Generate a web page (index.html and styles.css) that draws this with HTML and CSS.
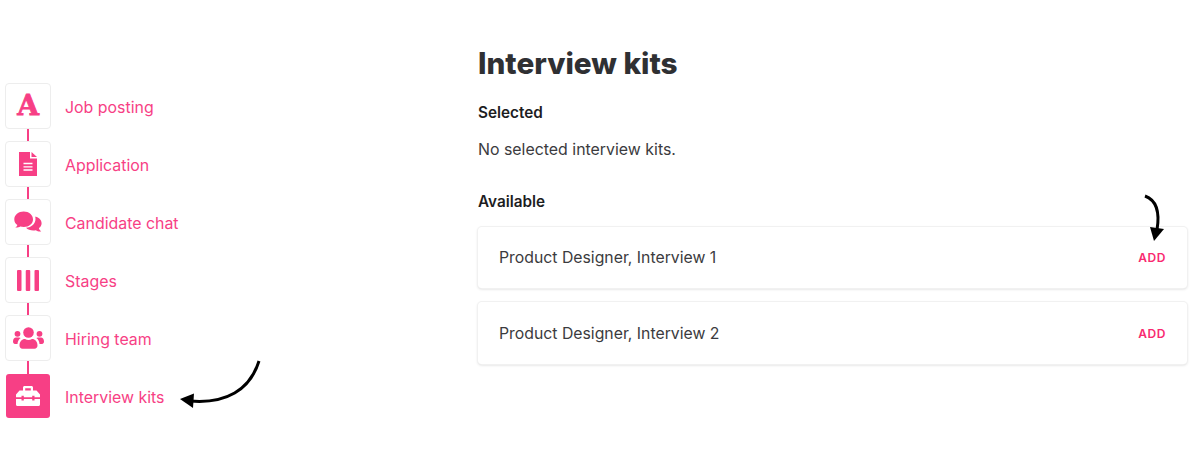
FILE: index.html
```html
<!DOCTYPE html>
<html lang="en">
<head>
  <meta charset="UTF-8">
  <title>Interview kits</title>
  <link rel="stylesheet" href="styles.css">
</head>
<body>
  <div class="page">
    <ul class="steps">
      <li class="step">
        <span class="step-icon"><span class="letter-icon">A</span></span>
        <span class="step-label">Job posting</span>
      </li>
      <li class="step">
        <span class="step-icon">
          <svg width="18" height="24" viewBox="0 0 18 24"><path d="M0 0h11v6.500h7V24H0z" fill="currentColor"/><path d="M12.500 0L18 5h-5.500z" fill="currentColor"/><path d="M4.500 11.500h9M4.500 14.800h9M4.500 18h9" stroke="#fff" stroke-width="1.300"/></svg>
        </span>
        <span class="step-label">Application</span>
      </li>
      <li class="step">
        <span class="step-icon">
          <svg width="28" height="22" viewBox="0 0 28 22"><path d="M19 8.500c0 4.200-4 7.500-9.200 7.500-1.300 0-2.400-.2-3.500-.5-1.200.8-2.900 1.200-5 1.100 1.100-.7 1.800-1.600 2.100-2.700C1.500 13 .3 11 .3 8.500.3 4 4.500.5 9.700.5S19 4 19 8.500z" fill="currentColor"/><path d="M20.600 5.500c4 .6 7 3.300 7 6.700 0 2-1 3.700-2.700 4.900.2 1.300.9 2.400 2.300 3.300-2.200.2-4.100-.3-5.400-1.200-.8.200-1.700.3-2.500.3-3 0-5.600-1-7.300-2.800 5.600-.3 9.500-3.900 9.500-8.700 0-.9-.1-1.700-.4-2.500z" fill="currentColor"/></svg>
        </span>
        <span class="step-label">Candidate chat</span>
      </li>
      <li class="step">
        <span class="step-icon">
          <svg width="22" height="21" viewBox="0 0 22 21"><rect x="0" width="4.500" height="21" rx="1" fill="currentColor"/><rect x="8.750" width="4.500" height="21" rx="1" fill="currentColor"/><rect x="17.500" width="4.500" height="21" rx="1" fill="currentColor"/></svg>
        </span>
        <span class="step-label">Stages</span>
      </li>
      <li class="step">
        <span class="step-icon">
          <svg width="31" height="22" viewBox="0 0 31 22"><circle cx="15.500" cy="5.500" r="5.300" fill="currentColor"/><path d="M6.500 18.500c0-4 2.500-6.500 5.500-6.500 1 .6 2.200 1 3.500 1s2.500-.4 3.500-1c3 0 5.500 2.500 5.500 6.500 0 2-1.200 3.200-3 3.200H9.500c-1.800 0-3-1.200-3-3.200z" fill="currentColor"/><circle cx="4.500" cy="6.800" r="2.900" fill="currentColor"/><circle cx="26.500" cy="6.800" r="2.900" fill="currentColor"/><path d="M0 14.500c0-2.600 1.500-4 3-4h3c.6 0 1.200.2 1.700.6-1.900 1.200-3 3.200-3.200 5.900H2c-1.200 0-2-1-2-2.500zM31 14.500c0-2.600-1.500-4-3-4h-3c-.6 0-1.200.2-1.700.6 1.900 1.200 3 3.200 3.200 5.900H29c1.200 0 2-1 2-2.500z" fill="currentColor"/></svg>
        </span>
        <span class="step-label">Hiring team</span>
      </li>
      <li class="step step-active">
        <span class="step-icon">
          <svg width="24" height="20" viewBox="0 0 24 20"><path d="M7 5V1.500C7 .7 7.700 0 8.500 0h7c.8 0 1.500.7 1.500 1.500V5h-2.200V2.200H9.200V5z" fill="currentColor"/><path d="M3.500 4.500h17L24 8.500v2.700h-5.500V9.700h-2.300v1.500H7.800V9.700H5.500v1.500H0V8.500z" fill="currentColor"/><path d="M0 13h5.500v1.500h2.300V13h8.400v1.500h2.300V13H24v5.500c0 .9-.6 1.500-1.500 1.500h-21C.6 20 0 19.400 0 18.500z" fill="currentColor"/></svg>
        </span>
        <span class="step-label">Interview kits</span>
      </li>
    </ul>

    <div class="content">
      <h1>Interview kits</h1>
      <h2>Selected</h2>
      <p class="empty">No selected interview kits.</p>
      <h2>Available</h2>
      <div class="kit">
        <span>Product Designer, Interview 1</span>
        <a class="add" href="#">ADD</a>
      </div>
      <div class="kit">
        <span>Product Designer, Interview 2</span>
        <a class="add" href="#">ADD</a>
      </div>
    </div>
  </div>

  <svg class="arrows" width="1200" height="456" viewBox="0 0 1200 456">
    <path d="M259 361C250 390 226 404 190 401" fill="none" stroke="#000" stroke-width="3"/>
    <path d="M180 399L194 393.500L193 408z" fill="#000"/>
    <path d="M1145 196C1156 200 1160 212 1157 230" fill="none" stroke="#000" stroke-width="3"/>
    <path d="M1154 241L1150 227L1164 229z" fill="#000"/>
  </svg>
</body>
</html>
```

FILE: styles.css
```css
body {
  font-family: Inter, "Noto Sans", sans-serif;
  background-color: #fff;
  color: #3b3b3e;
  margin: 0;
  padding: 0;
}

.page {
  display: flex;
  height: 456px;
  overflow: hidden;
}

.steps {
  list-style-type: none;
  width: 473px;
  box-sizing: border-box;
  margin: 0;
  padding: 83px 0 0 5px;
  flex-shrink: 0;
}

.step {
  display: flex;
  align-items: center;
  gap: 14px;
  height: 46px;
  margin-bottom: 12px;
  color: #f73f85;
  font-size: 16px;
}

.step-label {
  padding-top: 2px;
  font-size: 15.900px;
}

.step-icon {
  position: relative;
  display: flex;
  align-items: center;
  justify-content: center;
  box-sizing: border-box;
  width: 46px;
  height: 46px;
  border: 1px solid #ededed;
  border-radius: 4px;
  background-color: #fff;
}

/* connector down to the next step */
.step-icon::after {
  content: "";
  position: absolute;
  left: 21px;
  top: 45px;
  width: 2px;
  height: 13px;
  background-color: #f73f85;
}

.step:last-child .step-icon::after {
  display: none;
}

.step-active .step-icon {
  background-color: #f73f85;
  background-clip: padding-box;
  border-color: transparent;
  color: #fff;
}

.letter-icon {
  font-family: "DejaVu Serif", serif;
  font-weight: 700;
  font-size: 28px;
  line-height: 1;
  -webkit-text-stroke: 0.8px currentColor;
}

.content {
  flex: 1;
  padding: 44px 13px 0 5px;
}

h1 {
  font-size: 29.700px;
  font-weight: 800;
  line-height: 38px;
  margin: 0 0 21px;
  color: #2f3033;
}

h2 {
  font-size: 15.300px;
  font-weight: 600;
  line-height: 20px;
  margin: 0;
  color: #1d1d1f;
}

.empty {
  font-size: 15.900px;
  line-height: 24px;
  margin: 15px 0 30px;
}

.kit {
  display: flex;
  justify-content: space-between;
  align-items: center;
  height: 61px;
  box-sizing: border-box;
  padding: 0 21px;
  margin-top: 15px;
  border-radius: 4px;
  background-color: #fff;
  box-shadow: 0 0 0 1px #f1f1f1, 0 1px 3px rgba(0, 0, 0, 0.18);
  font-size: 15.800px;
}

.kit + .kit {
  margin-top: 14px;
  height: 62px;
}

.add {
  color: #f9296f;
  font-size: 12px;
  font-weight: 600;
  letter-spacing: 0.6px;
  text-decoration: none;
}

.arrows {
  position: absolute;
  left: 0;
  top: 0;
  pointer-events: none;
}
```
